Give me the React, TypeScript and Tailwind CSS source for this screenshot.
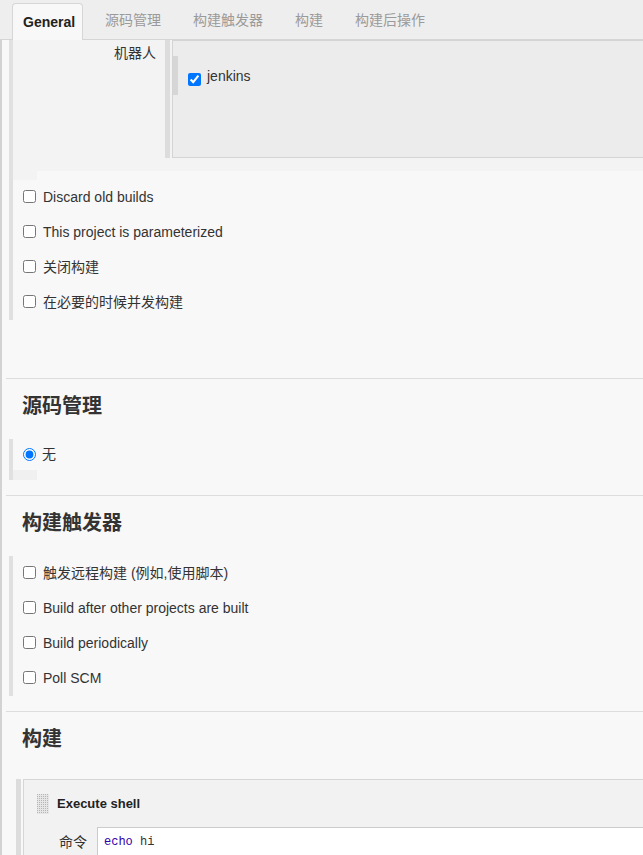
import React from "react";

function CheckRow({ label, checked = false }: { label: string; checked?: boolean }) {
  return (
    <div className="h-[35px] flex items-center pl-[10px]">
      <input
        type="checkbox"
        defaultChecked={checked}
        className="m-0 w-[13px] h-[13px] -translate-y-[1px] accent-[#0075ff]"
      />
      <span className="ml-[7px]">{label}</span>
    </div>
  );
}

function Grip() {
  const dots: React.ReactNode[] = [];
  for (let r = 0; r < 10; r++) {
    for (let c = 0; c < 6; c++) {
      dots.push(<rect key={`${r}-${c}`} x={c * 2} y={r * 2} width="1" height="1" fill="#b5b5b5" />);
    }
  }
  return (
    <svg width="12" height="20" viewBox="0 0 12 20" className="shrink-0">
      <rect x="0" y="0" width="12" height="20" fill="#e6e6e6" />
      {dots}
    </svg>
  );
}

export default function App() {
  return (
    <div className="w-[643px] h-[855px] overflow-hidden bg-[#f8f8f8] text-[#333] text-[14px] font-['Liberation_Sans','Noto_Sans_CJK_SC',sans-serif]">
      {/* Tab bar */}
      <div className="h-[40px] bg-[#eeeeee] border-b border-[#d5d5d5] flex items-end pl-[12px]">
        <div className="w-[71px] h-[37px] -mb-px pl-[10px] flex items-center bg-[#f8f8f8] border border-b-0 border-[#d6d6d6] rounded-t-[4px] font-bold text-[#222] whitespace-nowrap">
          General
        </div>
        <div className="h-[37px] ml-[22px] flex items-center gap-[32px] text-[#9a9a9a]">
          <span>源码管理</span>
          <span>构建触发器</span>
          <span>构建</span>
          <span>构建后操作</span>
        </div>
      </div>

      <div className="border-l-2 border-[#d2d2d2] h-[815px]">
        {/* General body */}
        <div className="ml-[7px] border-l-4 border-[#e0e0e0] h-[280px]">
          <div className="flex h-[131px] bg-[#f3f3f3]">
            <div className="w-[152px] text-right pr-[9px] pt-[3px]">机器人</div>
            <div className="w-[5px] h-[118px] bg-[#dcdcdc]" />
            <div className="ml-[2px] flex-1 h-[118px] bg-[#ececec] border border-r-0 border-[#d4d4d4] flex items-start pt-[15px]">
              <div className="w-[5px] h-[39px] bg-[#d6d6d6]" />
              <div className="ml-[10px] mt-[15px] flex items-start">
                <input type="checkbox" defaultChecked className="m-0 mt-[2px] w-[13px] h-[13px] accent-[#0075ff]" />
                <span className="ml-[6px] -mt-[3px] leading-[16px]">jenkins</span>
              </div>
            </div>
          </div>
          <div className="w-[24px] h-[9px] bg-[#f3f3f3]" />
          <CheckRow label="Discard old builds" />
          <CheckRow label="This project is parameterized" />
          <CheckRow label="关闭构建" />
          <CheckRow label="在必要的时候并发构建" />
        </div>
        <div className="h-[58px]" />

        {/* 源码管理 */}
        <div className="ml-[4px] border-t border-[#dcdcdc]">
          <h2 className="pt-[13px] pl-[16px] h-[41px] text-[20px] leading-[28px] font-bold">源码管理</h2>
          <div className="mt-[19px] ml-[3px] border-l-4 border-[#e0e0e0]">
            <div className="h-[31px] flex items-center pl-[10px]">
              <input type="radio" defaultChecked name="scm" className="m-0 w-[13px] h-[13px] accent-[#0075ff]" />
              <span className="ml-[6px]">无</span>
            </div>
            <div className="w-[24px] h-[10px] bg-[#f0f0f0]" />
          </div>
          <div className="h-[15px]" />
        </div>

        {/* 构建触发器 */}
        <div className="ml-[4px] border-t border-[#dcdcdc]">
          <h2 className="pt-[13px] pl-[16px] h-[41px] text-[20px] leading-[28px] font-bold">构建触发器</h2>
          <div className="mt-[19px] ml-[3px] border-l-4 border-[#e0e0e0]">
            <CheckRow label="触发远程构建 (例如,使用脚本)" />
            <CheckRow label="Build after other projects are built" />
            <CheckRow label="Build periodically" />
            <CheckRow label="Poll SCM" />
          </div>
          <div className="h-[15px]" />
        </div>

        {/* 构建 */}
        <div className="ml-[4px] border-t border-[#dcdcdc]">
          <h2 className="pt-[13px] pl-[16px] h-[41px] text-[20px] leading-[28px] font-bold">构建</h2>
          <div className="mt-[26px] ml-[10px] flex">
            <div className="w-[5px] bg-[#dcdcdc] h-[120px]" />
            <div className="ml-[2px] flex-1 bg-[#f2f2f2] border border-r-0 border-[#d6d6d6]">
              <div className="h-[47px] flex items-center pl-[13px]">
                <Grip />
                <span className="ml-[8px] text-[13px] font-bold text-[#222]">Execute shell</span>
              </div>
              <div className="flex">
                <div className="w-[73px] pr-[10px] pt-[5px] text-right">命令</div>
                <div className="flex-1 h-[60px] bg-white border border-r-0 border-[#cccccc] pl-[6px] pt-[6px] font-['Liberation_Mono',monospace] text-[12px] leading-[16px]">
                  <span className="text-[#3300aa]">echo</span> <span className="text-[#333]">hi</span>
                </div>
              </div>
            </div>
          </div>
        </div>
      </div>
    </div>
  );
}
